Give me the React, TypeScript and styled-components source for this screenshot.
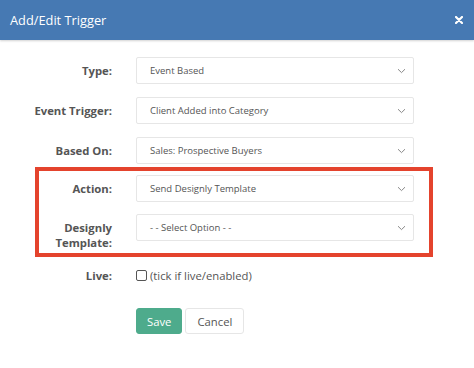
import React from "react";
import styled, { createGlobalStyle } from "styled-components";

const GlobalStyle = createGlobalStyle`
    body {
        margin: 0;
        background: #ffffff;
        font-family: "Open Sans", "Liberation Sans", sans-serif;
    }
`;

const Modal = styled.div`
    width: 474px;
    height: 368px;
    background: #ffffff;
    overflow: hidden;
`;

const Header = styled.div`
    height: 40px;
    box-sizing: border-box;
    padding: 0 11px 0 10px;
    background: #4679b3;
    display: flex;
    align-items: center;
    justify-content: space-between;
    box-shadow: 0 1px 2px rgba(0, 0, 0, 0.18);
`;

const Title = styled.h4`
    margin: 0;
    font-size: 12.8px;
    font-weight: 400;
    color: #ffffff;
`;

const Close = styled.button`
    border: 0;
    padding: 0;
    background: none;
    display: flex;
    cursor: pointer;
`;

const Body = styled.div`
    padding-top: 17px;
`;

const Row = styled.div<{ $labelWidth: number }>`
    display: grid;
    grid-template-columns: ${(p) => p.$labelWidth}px 278px;
    column-gap: 24px;
    align-items: start;

    & + & {
        margin-top: 13px;
    }
`;

const Label = styled.label<{ $pad?: number }>`
    text-align: right;
    font-size: 11.3px;
    font-weight: 700;
    line-height: 15px;
    color: #555555;
    padding-top: ${(p) => p.$pad ?? 6}px;
`;

const SelectBox = styled.div`
    height: 27px;
    box-sizing: border-box;
    border: 1px solid #e6e6e6;
    border-radius: 2px;
    padding: 0 7px 0 13px;
    display: flex;
    align-items: center;
    justify-content: space-between;
    font-size: 9.5px;
    color: #555555;
`;

const Highlight = styled.div`
    margin: 3px 0 0 35px;
    width: 398px;
    box-sizing: border-box;
    border: 4px solid #e4432d;
    padding: 4px 0 3px;

    ${Row} + ${Row} {
        margin-top: 12px;
    }
`;

const LiveRow = styled(Row)`
    margin-top: 11px;
    align-items: center;
`;

const CheckLine = styled.label`
    display: flex;
    align-items: center;
    gap: 3px;
    font-size: 11.3px;
    color: #555555;
`;

const CheckBox = styled.span`
    width: 9px;
    height: 9px;
    border: 1px solid #555555;
    border-radius: 2px;
    background: #ffffff;
`;

const Buttons = styled.div`
    display: flex;
    gap: 3px;
    margin: 25px 0 0 136px;
`;

const Button = styled.button<{ $primary?: boolean }>`
    height: 26px;
    box-sizing: border-box;
    padding: 0 ${(p) => (p.$primary ? 10 : 11)}px;
    border-radius: 3px;
    border: 1px solid ${(p) => (p.$primary ? "#4eab8c" : "#e6e6e6")};
    background: ${(p) => (p.$primary ? "#4eab8c" : "#ffffff")};
    color: ${(p) => (p.$primary ? "#ffffff" : "#555555")};
    font-family: inherit;
    font-size: 11.3px;
    cursor: pointer;
`;

const Chevron = () => (
    <svg width="9" height="6" viewBox="0 0 9 6">
        <path d="M1 1.2 L4.5 4.6 L8 1.2" fill="none" stroke="#888" strokeWidth="1" />
    </svg>
);

const Select = ({ value }: { value: string }) => (
    <SelectBox>
        <span>{value}</span>
        <Chevron />
    </SelectBox>
);

const App = () => {
    return (
        <Modal>
            <GlobalStyle />
            <Header>
                <Title>Add/Edit Trigger</Title>
                <Close aria-label="close">
                    <svg width="8" height="8" viewBox="0 0 8 8">
                        <path d="M1 1 L7 7 M7 1 L1 7" stroke="#fff" strokeWidth="2.2" strokeLinecap="round" />
                    </svg>
                </Close>
            </Header>
            <Body>
                <Row $labelWidth={112}>
                    <Label>Type:</Label>
                    <Select value="Event Based" />
                </Row>
                <Row $labelWidth={112}>
                    <Label>Event Trigger:</Label>
                    <Select value="Client Added into Category" />
                </Row>
                <Row $labelWidth={112}>
                    <Label>Based On:</Label>
                    <Select value="Sales: Prospective Buyers" />
                </Row>

                <Highlight>
                    <Row $labelWidth={73}>
                        <Label>Action:</Label>
                        <Select value="Send Designly Template" />
                    </Row>
                    <Row $labelWidth={73}>
                        <Label>Designly Template:</Label>
                        <Select value="- - Select Option - -" />
                    </Row>
                </Highlight>

                <LiveRow $labelWidth={112}>
                    <Label $pad={0}>Live:</Label>
                    <CheckLine>
                        <CheckBox />
                        (tick if live/enabled)
                    </CheckLine>
                </LiveRow>

                <Buttons>
                    <Button $primary>Save</Button>
                    <Button>Cancel</Button>
                </Buttons>
            </Body>
        </Modal>
    );
};

export default App;
